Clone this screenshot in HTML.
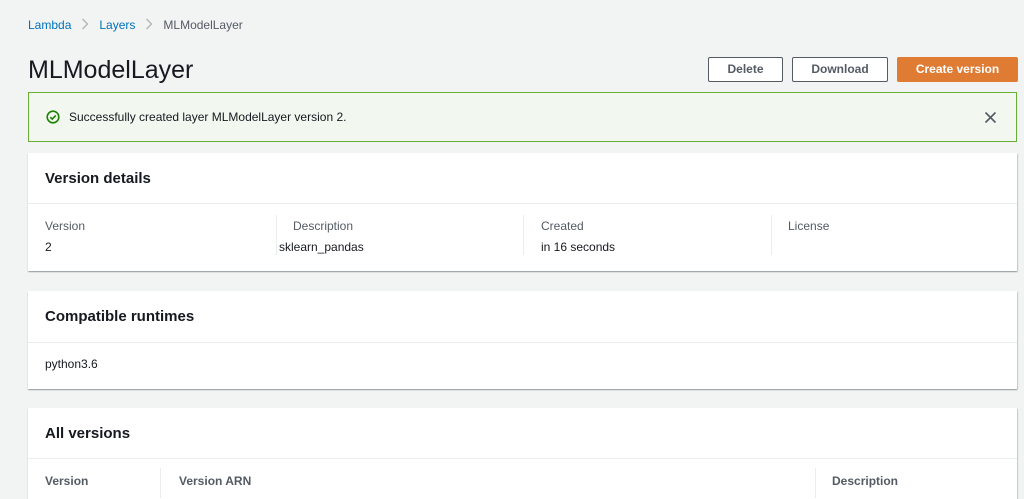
<!DOCTYPE html><html><head><style>
html,body{margin:0;width:1024px;height:499px;overflow:hidden}
body{background:#f2f3f3;font-family:"Liberation Sans",sans-serif;color:#16191f;position:relative}
.a{position:absolute}
.bc{top:18px;left:28px;font-size:12px;color:#545b64}
.bc span.l{color:#0073bb}
.bc svg{margin:0 10px;vertical-align:-1px}
h1{position:absolute;margin:0;top:56px;left:28px;font-size:25px;font-weight:400;color:#16191f}
.btn{position:absolute;top:57px;height:23px;border:1px solid #545b64;background:#fff;border-radius:2px;font-size:12px;font-weight:bold;color:#545b64;text-align:center;line-height:23px}
.alert{left:28px;top:92px;width:987px;height:48px;border:1px solid #6aaf35;background:#f2f8f0}
.panel{left:28px;width:989px;background:#fff;box-shadow:0 1px 1px rgba(0,28,36,.3),1px 1px 1px rgba(0,28,36,.15)}
.ph{position:absolute;left:17px;font-size:15px;font-weight:bold}
.hr{position:absolute;left:0;right:0;height:1px;background:#eaeded}
.lbl{position:absolute;font-size:12px;color:#545b64}
.val{position:absolute;font-size:12px;color:#16191f}
.vd{position:absolute;width:1px;background:#eaeded}
</style></head><body>
<div class="a bc"><span class="l">Lambda</span><svg width="8" height="12" viewBox="0 0 8 12"><path d="M1.5 1l5 5-5 5" fill="none" stroke="#aab7b8" stroke-width="1.3"/></svg><span class="l">Layers</span><svg width="8" height="12" viewBox="0 0 8 12"><path d="M1.5 1l5 5-5 5" fill="none" stroke="#aab7b8" stroke-width="1.3"/></svg>MLModelLayer</div>
<h1>MLModelLayer</h1>
<div class="btn" style="left:708px;width:73px">Delete</div>
<div class="btn" style="left:792px;width:94px">Download</div>
<div class="btn" style="left:897px;width:119px;background:#e07b33;border-color:#e07b33;color:#fff">Create version</div>
<div class="a alert">
<svg class="a" style="left:17px;top:17px" width="14" height="14" viewBox="0 0 14 14"><circle cx="7" cy="7" r="5.8" fill="none" stroke="#1d8102" stroke-width="1.6"/><path d="M4.3 7.2l1.9 1.9 3.6-3.7" fill="none" stroke="#1d8102" stroke-width="1.6"/></svg>
<div class="val" style="left:40px;top:17px">Successfully created layer MLModelLayer version 2.</div>
<svg class="a" style="left:955px;top:18px" width="13" height="13" viewBox="0 0 13 13"><path d="M1.5 1.5l10 10M11.5 1.5l-10 10" stroke="#545b64" stroke-width="1.6"/></svg>
</div>
<div class="a panel" style="top:153px;height:118px">
<div class="ph" style="top:17px">Version details</div>
<div class="hr" style="top:50px"></div>
<div class="lbl" style="left:17px;top:66px">Version</div><div class="val" style="left:17px;top:87px">2</div>
<div class="vd" style="left:248px;top:62px;height:40px"></div>
<div class="lbl" style="left:265px;top:66px">Description</div><div class="val" style="left:251px;top:87px">sklearn_pandas</div>
<div class="vd" style="left:495px;top:62px;height:40px"></div>
<div class="lbl" style="left:513px;top:66px">Created</div><div class="val" style="left:513px;top:87px">in 16 seconds</div>
<div class="vd" style="left:743px;top:62px;height:40px"></div>
<div class="lbl" style="left:760px;top:66px">License</div>
</div>
<div class="a panel" style="top:291px;height:98px">
<div class="ph" style="top:17px">Compatible runtimes</div>
<div class="hr" style="top:51px"></div>
<div class="val" style="left:17px;top:66px">python3.6</div>
</div>
<div class="a panel" style="top:408px;height:100px">
<div class="ph" style="top:17px">All versions</div>
<div class="hr" style="top:50px"></div>
<div class="val" style="left:17px;top:66px;font-weight:bold;color:#545b64">Version</div>
<div class="vd" style="left:132px;top:60px;height:30px"></div>
<div class="val" style="left:151px;top:66px;font-weight:bold;color:#545b64">Version ARN</div>
<div class="vd" style="left:787px;top:60px;height:30px"></div>
<div class="val" style="left:804px;top:66px;font-weight:bold;color:#545b64">Description</div>
</div>
</body></html>
